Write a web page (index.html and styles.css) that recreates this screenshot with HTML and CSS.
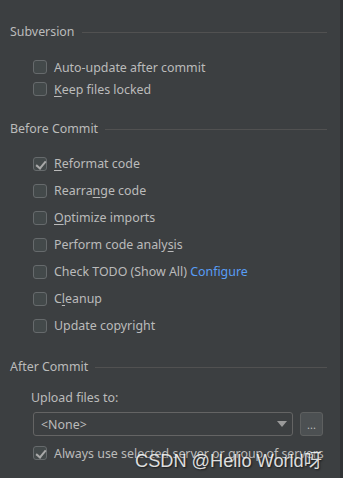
FILE: index.html
```html
<!DOCTYPE html>
<html lang="en">
<head>
    <meta charset="UTF-8">
    <meta name="viewport" content="width=device-width, initial-scale=1.0">
    <title>Version Control Settings</title>
    <link rel="stylesheet" href="styles.css">
</head>
<body>
    <div class="panel">
        <div class="section section-svn">
            <div class="section-title"><span>Subversion</span><div class="sep"></div></div>
            <div class="options compact">
                <label class="option"><span class="box"></span><span>Auto-update after commit</span></label>
                <label class="option"><span class="box"></span><span><u>K</u>eep files locked</span></label>
            </div>
        </div>

        <div class="section section-before">
            <div class="section-title"><span>Before Commit</span><div class="sep"></div></div>
            <div class="options">
                <label class="option"><span class="box checked"></span><span><u>R</u>eformat code</span></label>
                <label class="option"><span class="box"></span><span>Rearra<u>n</u>ge code</span></label>
                <label class="option"><span class="box"></span><span><u>O</u>ptimize imports</span></label>
                <label class="option"><span class="box"></span><span>Perform code analy<u>s</u>is</span></label>
                <label class="option"><span class="box"></span><span>Check TODO (Show All) <a class="link">Configure</a></span></label>
                <label class="option"><span class="box"></span><span>C<u>l</u>eanup</span></label>
                <label class="option"><span class="box"></span><span>Update copyright</span></label>
            </div>
        </div>

        <div class="section section-after">
            <div class="section-title"><span>After Commit</span><div class="sep"></div></div>
            <div class="upload">
                <div class="upload-label">Upload files to:</div>
                <div class="combo-row">
                    <div class="combo"><span>&lt;None&gt;</span><span class="arrow"></span></div>
                    <div class="dots-btn">...</div>
                </div>
                <label class="option"><span class="box checked"></span><span>Always use selected server or group of servers</span></label>
            </div>
        </div>
    </div>

    <div class="scroll-edge"></div>
    <div class="watermark">CSDN @Hello World呀</div>
</body>
</html>
```

FILE: styles.css
```css
* {
    margin: 0;
    padding: 0;
    box-sizing: border-box;
}

body {
    background: #3c3f41;
    color: #bbbbbb;
    font-family: 'Noto Sans', 'Noto Sans CJK SC', sans-serif;
    font-size: 12.4px;
    width: 343px;
    height: 478px;
    overflow: hidden;
    position: relative;
}

.panel {
    padding: 23px 16px 0 10px;
}

.section-title {
    display: flex;
    align-items: center;
    height: 18px;
    line-height: 18px;
    color: #bbbbbb;
}

.sep {
    flex: 1;
    height: 1px;
    background: #515151;
    margin-left: 7px;
}

.options {
    padding-left: 23px;
    margin-top: 12px;
}

.options.compact {
    margin-top: 15px;
}

.option {
    display: flex;
    align-items: center;
    height: 27px;
    gap: 7px;
    white-space: nowrap;
}

.compact .option {
    height: 22px;
}

.option u {
    text-decoration: underline;
    text-underline-offset: 2px;
}

.box {
    width: 14px;
    height: 14px;
    border: 1px solid #666a6c;
    border-radius: 3px;
    background: #43494a;
    flex-shrink: 0;
    position: relative;
}

.box.checked::after {
    content: "";
    position: absolute;
    left: 4px;
    top: 1px;
    width: 4px;
    height: 8px;
    border-right: 2px solid #a9a9a9;
    border-bottom: 2px solid #a9a9a9;
    transform: rotate(40deg);
}

.link {
    color: #589df6;
}

.section-before {
    margin-top: 20px;
}

.section-after {
    margin-top: 19px;
}

.upload {
    padding-left: 21px;
    margin-top: 13px;
}

.upload-label {
    height: 18px;
    line-height: 18px;
}

.combo-row {
    display: flex;
    gap: 7px;
    margin-top: 5px;
    padding-left: 2px;
}

.combo {
    width: 260px;
    height: 24px;
    border: 1px solid #646464;
    border-radius: 3px;
    background: #3c3f41;
    display: flex;
    align-items: center;
    justify-content: space-between;
    padding: 0 5px 0 7px;
}

.arrow {
    width: 0;
    height: 0;
    border-left: 5px solid transparent;
    border-right: 5px solid transparent;
    border-top: 6px solid #9a9a9a;
}

.dots-btn {
    width: 23px;
    height: 24px;
    border: 1px solid #5e6060;
    border-radius: 3px;
    background: #4c5052;
    text-align: center;
    line-height: 24px;
    font-size: 11px;
}

.upload .option {
    height: 22px;
    margin-top: 6px;
    padding-left: 2px;
}

.scroll-edge {
    position: absolute;
    top: 0;
    right: 0;
    width: 3px;
    height: 100%;
    background: #313335;
}

.watermark {
    position: absolute;
    left: 135px;
    top: 446px;
    font-family: 'Liberation Sans', 'Noto Sans CJK SC', sans-serif;
    font-size: 18.2px;
    color: rgba(255, 255, 255, 0.85);
    text-shadow: 1px 1px 2px rgba(0, 0, 0, 0.6);
    white-space: nowrap;
}
```
